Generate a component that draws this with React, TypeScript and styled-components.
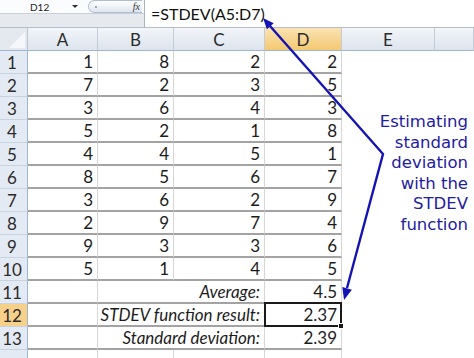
import React from 'react'
import styled, { createGlobalStyle, css } from 'styled-components'

const GlobalStyle = createGlobalStyle`
  html, body {
    margin: 0;
    padding: 0;
    background: #fff;
    overflow: hidden;
  }
`

const COLS = [28, 70, 76, 91, 77, 93, 39]
const LETTERS = ['A', 'B', 'C', 'D', 'E', '']

const rows: number[][] = [
  [1, 8, 2, 2],
  [7, 2, 3, 5],
  [3, 6, 4, 3],
  [5, 2, 1, 8],
  [4, 4, 5, 1],
  [8, 5, 6, 7],
  [3, 6, 2, 9],
  [2, 9, 7, 4],
  [9, 3, 3, 6],
  [5, 1, 4, 5],
]

const summary = [
  { label: 'Average:', value: '4.5' },
  { label: 'STDEV function result:', value: '2.37', selected: true },
  { label: 'Standard deviation:', value: '2.39' },
]

const Sheet = styled.div`
  position: relative;
  width: 474px;
  height: 358px;
  overflow: hidden;
  font-family: Lato, 'Liberation Sans', sans-serif;
  color: #1c1c1c;
`

const FormulaBar = styled.div`
  display: flex;
  height: 27px;
  border-bottom: 1px solid #b4bdc9;
`

const NameArea = styled.div`
  width: 144px;
  display: flex;
  flex-direction: column;
  background: #e6e9ee;
`

const NameRow = styled.div`
  height: 13px;
  display: flex;
  align-items: center;
  background: #fbfcfd;
  border-bottom: 1px solid #c9d0d9;
`

const NameBox = styled.div`
  width: 82px;
  display: flex;
  align-items: center;
  justify-content: space-between;
  padding: 0 4px 0 30px;
  box-sizing: border-box;
  font-size: 10px;
  color: #222;
`

const DropArrow = styled.span`
  width: 0;
  height: 0;
  border-left: 3px solid transparent;
  border-right: 3px solid transparent;
  border-top: 3px solid #333;
`

const FxButton = styled.div`
  flex: 1;
  height: 11px;
  margin: 0 2px 0 6px;
  display: flex;
  align-items: center;
  justify-content: space-between;
  padding: 0 2px 0 6px;
  border: 1px solid #aebdd2;
  border-right: none;
  border-radius: 8px 0 0 8px;
  background: linear-gradient(#ffffff, #dfe6ef);
  font-family: 'Liberation Serif', serif;
  font-style: italic;
  font-size: 10px;
  color: #333;
`

const Dot = styled.span`
  width: 2px;
  height: 2px;
  background: #9aa8bb;
`

const FormulaInput = styled.div`
  flex: 1;
  display: flex;
  align-items: center;
  padding-left: 6px;
  background: #fff;
  border-left: 1px solid #a9b4c2;
  font-size: 16px;
  color: #111;
`

const Grid = styled.div`
  display: grid;
  grid-template-columns: ${COLS.map((c) => `${c}px`).join(' ')};
  grid-auto-rows: 23px;
`

const headerBase = css`
  display: flex;
  align-items: center;
  justify-content: center;
  box-sizing: border-box;
  font-size: 17px;
  color: #2b2b2b;
`

const Corner = styled.div`
  position: relative;
  background: #e4e9f0;
  border-right: 1px solid #b7c4d4;
  border-bottom: 1px solid #9eb6ce;
  box-sizing: border-box;

  &::after {
    content: '';
    position: absolute;
    right: 2px;
    bottom: 2px;
    width: 16px;
    height: 16px;
    background: #f5f7fa;
    clip-path: polygon(100% 0, 100% 100%, 0 100%);
  }
`

const ColHeader = styled.div<{ $active?: boolean }>`
  ${headerBase}
  border-right: 1px solid #c3ccd8;
  border-bottom: 1px solid #9eb6ce;
  background: ${({ $active }) =>
    $active ? 'linear-gradient(#fae3b4, #f4c871)' : 'linear-gradient(#f2f5f9, #dde4ee)'};
`

const RowHeader = styled.div<{ $active?: boolean }>`
  ${headerBase}
  padding-right: 3px;
  border-right: 1px solid #9eb6ce;
  border-bottom: 1px solid #c7d3e1;
  background: ${({ $active }) => ($active ? '#f7d08a' : '#e4eaf3')};
`

const Cell = styled.div<{ $span?: number; $italic?: boolean; $blank?: boolean; $selected?: boolean }>`
  position: relative;
  display: flex;
  align-items: center;
  justify-content: flex-end;
  padding-right: 4px;
  box-sizing: border-box;
  font-size: 17px;
  font-style: ${({ $italic }) => ($italic ? 'italic' : 'normal')};
  grid-column: span ${({ $span }) => $span ?? 1};
  ${({ $blank }) =>
    !$blank &&
    css`
      border-right: 1px solid #d6d6d6;
      border-bottom: 2px solid #a3a3a3;
    `}
  ${({ $selected }) =>
    $selected &&
    css`
      &::after {
        content: '';
        position: absolute;
        inset: -2px -1px -2px -1px;
        border: 2px solid #1a1a1a;
      }
      &::before {
        content: '';
        position: absolute;
        right: -3px;
        bottom: -4px;
        width: 4px;
        height: 4px;
        background: #1a1a1a;
        border: 1px solid #fff;
        z-index: 1;
      }
    `}
`

const Overlay = styled.svg`
  position: absolute;
  left: 0;
  top: 0;
  pointer-events: none;
`

const Callout = styled.div`
  position: absolute;
  right: 6px;
  top: 112px;
  text-align: right;
  font-family: 'DejaVu Sans', Verdana, sans-serif;
  font-size: 16.5px;
  line-height: 20.6px;
  color: #1e20a2;
`

const ARROW = '#1414b4'

export default function App() {
  return (
    <Sheet>
      <GlobalStyle />
      <FormulaBar>
        <NameArea>
          <NameRow>
            <NameBox>
              <span>D12</span>
              <DropArrow />
            </NameBox>
            <FxButton>
              <Dot />
              <span>fx</span>
            </FxButton>
          </NameRow>
        </NameArea>
        <FormulaInput>=STDEV(A5:D7)</FormulaInput>
      </FormulaBar>

      <Grid>
        <Corner />
        {LETTERS.map((l, i) => (
          <ColHeader key={i} $active={l === 'D'}>
            {l}
          </ColHeader>
        ))}

        {rows.map((r, i) => (
          <React.Fragment key={i}>
            <RowHeader>{i + 1}</RowHeader>
            {r.map((v, j) => (
              <Cell key={j}>{v}</Cell>
            ))}
            <Cell $blank />
            <Cell $blank />
          </React.Fragment>
        ))}

        {summary.map((s, i) => (
          <React.Fragment key={s.label}>
            <RowHeader $active={s.selected}>{i + 11}</RowHeader>
            <Cell />
            <Cell $span={2} $italic>
              {s.label}
            </Cell>
            <Cell $selected={s.selected}>{s.value}</Cell>
            <Cell $blank />
            <Cell $blank />
          </React.Fragment>
        ))}

        <RowHeader />
        <Cell />
        <Cell />
        <Cell />
        <Cell />
        <Cell $blank />
        <Cell $blank />
      </Grid>

      <Overlay width="474" height="358" viewBox="0 0 474 358">
        <polyline
          points="270,26 383,154 347,288"
          fill="none"
          stroke={ARROW}
          strokeWidth="2.4"
          strokeLinejoin="miter"
        />
        <polygon points="263,18 273.7,23.3 266.9,29.2" fill={ARROW} />
        <polygon points="344,300 351.9,289.7 342.3,287.1" fill={ARROW} />
      </Overlay>

      <Callout>
        Estimating
        <br />
        standard
        <br />
        deviation
        <br />
        with the
        <br />
        STDEV
        <br />
        function
      </Callout>
    </Sheet>
  )
}
